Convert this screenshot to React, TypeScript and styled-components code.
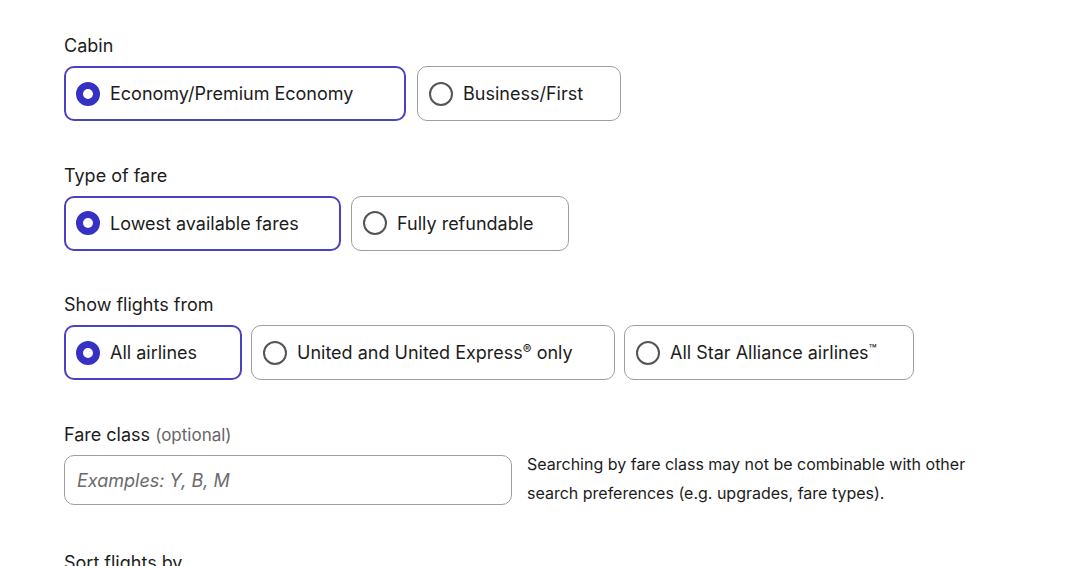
import React, { FC } from "react";
import styled, { createGlobalStyle } from "styled-components";

const GlobalStyle = createGlobalStyle`
  body {
    margin: 0;
    background: #ffffff;
    font-family: Inter, "Noto Sans", sans-serif;
    color: #1f1f1f;
  }
`;

type Option = { label: React.ReactNode; width: number };

type RadioGroupProps = {
  title: string;
  options: Option[];
  selected: number;
  gap: number;
};

const RadioGroup: FC<RadioGroupProps> = ({ title, options, selected, gap }) => (
  <Section>
    <Label>{title}</Label>
    <OptionRow $gap={gap}>
      {options.map((opt, i) => (
        <OptionBox key={i} $active={i === selected} $width={opt.width}>
          <Radio $active={i === selected} />
          <OptionText>{opt.label}</OptionText>
        </OptionBox>
      ))}
    </OptionRow>
  </Section>
);

const App: FC = () => {
  return (
    <Page>
      <GlobalStyle />
      <RadioGroup
        title="Cabin"
        selected={0}
        gap={11}
        options={[
          { label: "Economy/Premium Economy", width: 342 },
          { label: "Business/First", width: 204 },
        ]}
      />
      <RadioGroup
        title="Type of fare"
        selected={0}
        gap={10}
        options={[
          { label: "Lowest available fares", width: 277 },
          { label: "Fully refundable", width: 218 },
        ]}
      />
      <RadioGroup
        title="Show flights from"
        selected={0}
        gap={9}
        options={[
          { label: "All airlines", width: 178 },
          {
            label: (
              <>
                United and United Express<Sup>®</Sup> only
              </>
            ),
            width: 364,
          },
          {
            label: (
              <>
                All Star Alliance airlines<Sup>™</Sup>
              </>
            ),
            width: 290,
          },
        ]}
      />
      <Section>
        <Label>
          Fare class <Optional>(optional)</Optional>
        </Label>
        <FareRow>
          <FareInput placeholder="Examples: Y, B, M" />
          <HelpText>
            Searching by fare class may not be combinable with other
            <br />
            search preferences (e.g. upgrades, fare types).
          </HelpText>
        </FareRow>
      </Section>
      <Section>
        <Label>Sort flights by</Label>
      </Section>
    </Page>
  );
};

export default App;

const Page = styled.div`
  padding: 34px 64px 0;
  display: flex;
  flex-direction: column;
  gap: 42.7px;
  height: 566px;
  box-sizing: border-box;
  overflow: hidden;
`;

const Section = styled.div`
  display: flex;
  flex-direction: column;
  gap: 8px;
`;

const Label = styled.div`
  font-size: 18px;
  line-height: 24px;
  color: #1c1c1c;
`;

const Optional = styled.span`
  font-size: 17px;
  color: #666666;
`;

const OptionRow = styled.div<{ $gap: number }>`
  display: flex;
  gap: ${(p) => p.$gap}px;
`;

const OptionBox = styled.div<{ $active: boolean; $width: number }>`
  box-sizing: border-box;
  width: ${(p) => p.$width}px;
  height: 55px;
  display: flex;
  align-items: center;
  gap: 10px;
  padding-left: ${(p) => (p.$active ? 10 : 11)}px;
  border: ${(p) => (p.$active ? "2px solid #4b42c2" : "1px solid #9e9e9e")};
  border-radius: 10px;
  background: #ffffff;
`;

const Radio = styled.span<{ $active: boolean }>`
  box-sizing: border-box;
  flex: none;
  width: 24px;
  height: 24px;
  border-radius: 50%;
  border: ${(p) => (p.$active ? "7px solid #3631c4" : "2px solid #555555")};
  background: #ffffff;
`;

const OptionText = styled.span`
  font-size: 18px;
  color: #1c1c1c;
  white-space: nowrap;
`;

const Sup = styled.sup`
  font-size: 13px;
  vertical-align: 5px;
  line-height: 0;
`;

const FareRow = styled.div`
  display: flex;
  align-items: flex-start;
  gap: 15px;
`;

const FareInput = styled.input`
  box-sizing: border-box;
  width: 448px;
  height: 50px;
  border: 1px solid #9e9e9e;
  border-radius: 10px;
  padding: 0 12px;
  font-family: Inter, "Noto Sans", sans-serif;
  font-size: 18px;
  outline: none;

  &::placeholder {
    font-style: italic;
    color: #6b6b6b;
  }
`;

const HelpText = styled.div`
  font-size: 16px;
  line-height: 29px;
  color: #1c1c1c;
  margin-top: -5px;
`;
